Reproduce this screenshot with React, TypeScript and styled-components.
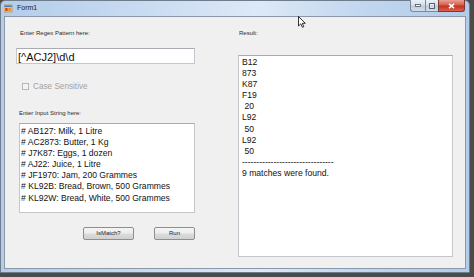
import React, { FC } from 'react';
import styled, { createGlobalStyle } from 'styled-components';

const GlobalStyle = createGlobalStyle`
  html, body {
    margin: 0;
    padding: 0;
    background: #4b4b4b;
    width: 474px;
    height: 277px;
    overflow: hidden;
  }
  * { box-sizing: border-box; }
`;

const Window = styled.div`
  position: relative;
  width: 470px;
  height: 273px;
  display: flex;
  flex-direction: column;
  padding: 0 3px 3px 3px;
  border: 1px solid #6f7c8c;
  border-radius: 5px 5px 0 0;
  background: linear-gradient(90deg, #b4cdea 0%, #c8dbf1 30%, #dde9f7 55%, #c4d8ef 75%, #b1cbe9 100%);
  font-family: "Liberation Sans", Arial, sans-serif;
`;

const TitleBar = styled.div`
  height: 15px;
  display: flex;
  align-items: flex-start;
  flex-shrink: 0;
`;

const FormIcon = styled.svg`
  width: 9px;
  height: 9px;
  margin: 3px 0 0 0;
`;

const Title = styled.div`
  font-size: 7px;
  line-height: 14px;
  margin-left: 4px;
  color: #1b1b1b;
  flex: 1;
`;

const Caption = styled.div`
  display: flex;
  flex-shrink: 0;
  margin-top: -1px;
  margin-right: 1px;
  height: 12px;
`;

const CapButton = styled.div<{ $w: number }>`
  flex-shrink: 0;
  width: ${(p) => p.$w}px;
  height: 12px;
  display: flex;
  align-items: center;
  justify-content: center;
  border: 1px solid #7d8999;
  border-top: none;
  border-right: none;
  background: linear-gradient(#e9f0f8 0%, #d5dfeb 45%, #bfcbdb 55%, #d3deea 100%);
  &:first-child { border-bottom-left-radius: 3px; }
`;

const CloseButton = styled.div`
  flex-shrink: 0;
  width: 27px;
  height: 12px;
  display: flex;
  align-items: center;
  justify-content: center;
  border: 1px solid #7a3a33;
  border-top: none;
  border-bottom-right-radius: 3px;
  background: linear-gradient(#e8a093 0%, #d5604f 45%, #c4321f 55%, #d8624f 100%);
`;

const Client = styled.div`
  flex: 1;
  background: #f0f0f0;
  border: 1px solid #8a98aa;
  display: grid;
  grid-template-columns: 179px 215px;
  column-gap: 43px;
  padding: 12px 0 0 11px;
`;

const Column = styled.div`
  display: flex;
  flex-direction: column;
`;

const Label = styled.div<{ $top?: number; $left?: number }>`
  font-size: 6px;
  line-height: 8px;
  height: 8px;
  color: #2a2a2a;
  margin-top: ${(p) => p.$top ?? 0}px;
  margin-left: ${(p) => p.$left ?? 0}px;
  white-space: nowrap;
`;

const TextBox = styled.div`
  margin-top: 11px;
  height: 16px;
  background: #fff;
  border: 1px solid #c4c6cc;
  border-top-color: #a9abb2;
  font-size: 11px;
  line-height: 13px;
  padding: 2px 0 0 1px;
  color: #111;
  white-space: pre;
`;

const CheckRow = styled.div`
  margin-top: 18px;
  margin-left: 6px;
  height: 9px;
  display: flex;
  align-items: center;
  gap: 4px;
`;

const CheckBox = styled.div`
  width: 7px;
  height: 7px;
  border: 1px solid #b6b6b6;
  background: #f4f4f4;
`;

const CheckText = styled.div`
  font-size: 8.2px;
  color: #a3a3a3;
  line-height: 9px;
`;

const Field = styled.div<{ $top: number; $left: number }>`
  margin-top: ${(p) => p.$top}px;
  margin-left: ${(p) => p.$left}px;
`;

const MultiLine = styled.div<{ $h: number; $pt: number; $pl: number }>`
  height: ${(p) => p.$h}px;
  background: #fff;
  border: 1px solid #c4c6cc;
  border-top-color: #a9abb2;
  padding: ${(p) => p.$pt}px 0 0 ${(p) => p.$pl}px;
  font-size: 8.6px;
  line-height: 11.1px;
  color: #111;
  white-space: pre;
`;

const ButtonRow = styled.div`
  margin-top: 14px;
  display: flex;
  justify-content: flex-end;
  gap: 20px;
`;

const Button = styled.div<{ $w: number }>`
  width: ${(p) => p.$w}px;
  height: 13px;
  border: 1px solid #8e8e8e;
  border-radius: 2px;
  background: linear-gradient(#f4f4f4 0%, #ececec 48%, #dcdcdc 52%, #d0d0d0 100%);
  font-size: 6px;
  line-height: 11px;
  text-align: center;
  color: #222;
`;

const Cursor = styled.svg`
  position: absolute;
  left: 297px;
  top: 15px;
  width: 8px;
  height: 12px;
`;

const inputLines = [
  '# AB127: Milk, 1 Litre',
  '# AC2873: Butter, 1 Kg',
  '# J7K87: Eggs, 1 dozen',
  '# AJ22: Juice, 1 Litre',
  '# JF1970: Jam, 200 Grammes',
  '# KL92B: Bread, Brown, 500 Grammes',
  '# KL92W: Bread, White, 500 Grammes',
];

const resultLines = [
  'B12', '873', 'K87', 'F19', ' 20', 'L92', ' 50', 'L92', ' 50',
  '-'.repeat(32),
  '9 matches were found.',
];

const App: FC = () => (
  <>
    <GlobalStyle />
    <Window>
      <TitleBar>
        <FormIcon viewBox="0 0 9 9">
          <rect x="0" y="1" width="8" height="7" fill="#f5d27a" stroke="#b07a20" strokeWidth="0.6" />
          <rect x="0.5" y="1.5" width="7" height="1.6" fill="#3d77c9" />
          <rect x="1.2" y="4" width="2.5" height="3" fill="#d9442c" />
          <rect x="4.3" y="4" width="2.5" height="3" fill="#e58a2a" />
        </FormIcon>
        <Title>Form1</Title>
        <Caption>
          <CapButton $w={15}>
            <svg width="6" height="3" viewBox="0 0 6 3"><rect x="0.5" y="0.5" width="5" height="2" fill="#fff" stroke="#4a5563" strokeWidth="0.8" /></svg>
          </CapButton>
          <CapButton $w={13}>
            <svg width="6" height="6" viewBox="0 0 6 6"><rect x="0.6" y="0.6" width="4.8" height="4.8" fill="none" stroke="#4a5563" strokeWidth="1" /><rect x="1.4" y="1.6" width="3.2" height="3" fill="none" stroke="#fff" strokeWidth="0.6" /></svg>
          </CapButton>
          <CloseButton>
            <svg width="7" height="6" viewBox="0 0 7 6"><path d="M1 0.8 L6 5.2 M6 0.8 L1 5.2" stroke="#fff" strokeWidth="1.6" /></svg>
          </CloseButton>
        </Caption>
      </TitleBar>
      <Client>
        <Column>
          <Label $left={4}>Enter Regex Pattern here:</Label>
          <TextBox>[^ACJ2]\d\d</TextBox>
          <CheckRow>
            <CheckBox />
            <CheckText>Case Sensitive</CheckText>
          </CheckRow>
          <Label $top={18} $left={3}>Enter Input String here:</Label>
          <Field $top={6} $left={3}>
            <MultiLine $h={90} $pt={2} $pl={1}>
              {inputLines.join('\n')}
            </MultiLine>
          </Field>
          <ButtonRow>
            <Button $w={51}>IsMatch?</Button>
            <Button $w={41}>Run</Button>
          </ButtonRow>
        </Column>
        <Column>
          <Label $left={1}>Result:</Label>
          <Field $top={18} $left={0}>
            <MultiLine $h={202} $pt={1} $pl={3}>
              {resultLines.join('\n')}
            </MultiLine>
          </Field>
        </Column>
      </Client>
      <Cursor viewBox="0 0 8 12">
        <path d="M0.5 0.5 L0.5 10 L2.8 7.8 L4.4 11.3 L5.8 10.7 L4.3 7.3 L7.3 7.3 Z" fill="#fff" stroke="#000" strokeWidth="0.8" strokeLinejoin="round" />
      </Cursor>
    </Window>
  </>
);

export default App;
